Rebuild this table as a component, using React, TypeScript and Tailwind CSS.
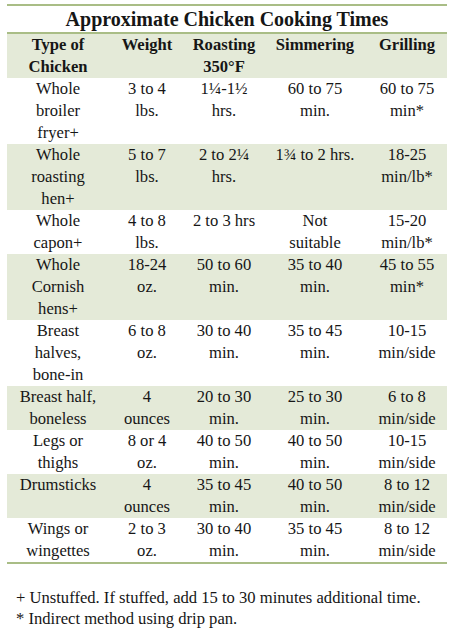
import React from "react";

const rows: string[][][] = [
  [["Whole", "broiler", "fryer+"], ["3 to 4", "lbs."], ["1¼-1½", "hrs."], ["60 to 75", "min."], ["60 to 75", "min*"]],
  [["Whole", "roasting", "hen+"], ["5 to 7", "lbs."], ["2 to 2¼", "hrs."], ["1¾ to 2 hrs."], ["18-25", "min/lb*"]],
  [["Whole", "capon+"], ["4 to 8", "lbs."], ["2 to 3 hrs"], ["Not", "suitable"], ["15-20", "min/lb*"]],
  [["Whole", "Cornish", "hens+"], ["18-24", "oz."], ["50 to 60", "min."], ["35 to 40", "min."], ["45 to 55", "min*"]],
  [["Breast", "halves,", "bone-in"], ["6 to 8", "oz."], ["30 to 40", "min."], ["35 to 45", "min."], ["10-15", "min/side"]],
  [["Breast half,", "boneless"], ["4", "ounces"], ["20 to 30", "min."], ["25 to 30", "min."], ["6 to 8", "min/side"]],
  [["Legs or", "thighs"], ["8 or 4", "oz."], ["40 to 50", "min."], ["40 to 50", "min."], ["10-15", "min/side"]],
  [["Drumsticks"], ["4", "ounces"], ["35 to 45", "min."], ["40 to 50", "min."], ["8 to 12", "min/side"]],
  [["Wings or", "wingettes"], ["2 to 3", "oz."], ["30 to 40", "min."], ["35 to 45", "min."], ["8 to 12", "min/side"]],
];

const header: string[][] = [
  ["Type of", "Chicken"],
  ["Weight"],
  ["Roasting", "350°F"],
  ["Simmering"],
  ["Grilling"],
];

const rowHeights = ["h-[66px]", "h-[66px]", "h-[44px]", "h-[66px]", "h-[66px]", "h-[44px]", "h-[44px]", "h-[44px]", "h-[44px]"];

function Cell({ lines, bold }: { lines: string[]; bold?: boolean }) {
  return (
    <div className={"text-center " + (bold ? "font-bold" : "")}>
      {lines.map((l, i) => (
        <div key={i} className="whitespace-nowrap">
          {l}
        </div>
      ))}
    </div>
  );
}

export default function App() {
  return (
    <div className="w-[474px] h-[632px] bg-white text-[#161616] overflow-hidden font-['Liberation_Serif','Times_New_Roman',serif]">
      <div className="pt-[4px] pl-[7px] w-[447px]">
        <div className="h-[2px] bg-[#a9bd86]" />
        <div className="h-[26px] text-[20px] leading-[26px] font-bold text-center">
          Approximate Chicken Cooking Times
        </div>
        <div className="h-[2px] bg-[#a9bd86]" />
        <div className="grid grid-cols-[102px_76px_78px_104px_80px] bg-[#e4ead8] h-[44px] pt-[-1px] text-[16.6px] leading-[22px]">
          {header.map((h, i) => (
            <Cell key={i} lines={h} bold />
          ))}
        </div>
        {rows.map((r, ri) => (
          <div
            key={ri}
            className={
              "grid grid-cols-[102px_76px_78px_104px_80px] text-[16.6px] leading-[22px] " +
              rowHeights[ri] +
              " " +
              (ri % 2 === 1 ? "bg-[#e4ead8]" : "bg-white")
            }
          >
            {r.map((c, ci) => (
              <Cell key={ci} lines={c} />
            ))}
          </div>
        ))}
        <div className="h-[2px] bg-[#a9bd86]" />
      </div>
      <div className="mt-[23px] pl-[16px] text-[16.6px] leading-[21px]">
        <div>+ Unstuffed. If stuffed, add 15 to 30 minutes additional time.</div>
        <div>* Indirect method using drip pan.</div>
      </div>
    </div>
  );
}
